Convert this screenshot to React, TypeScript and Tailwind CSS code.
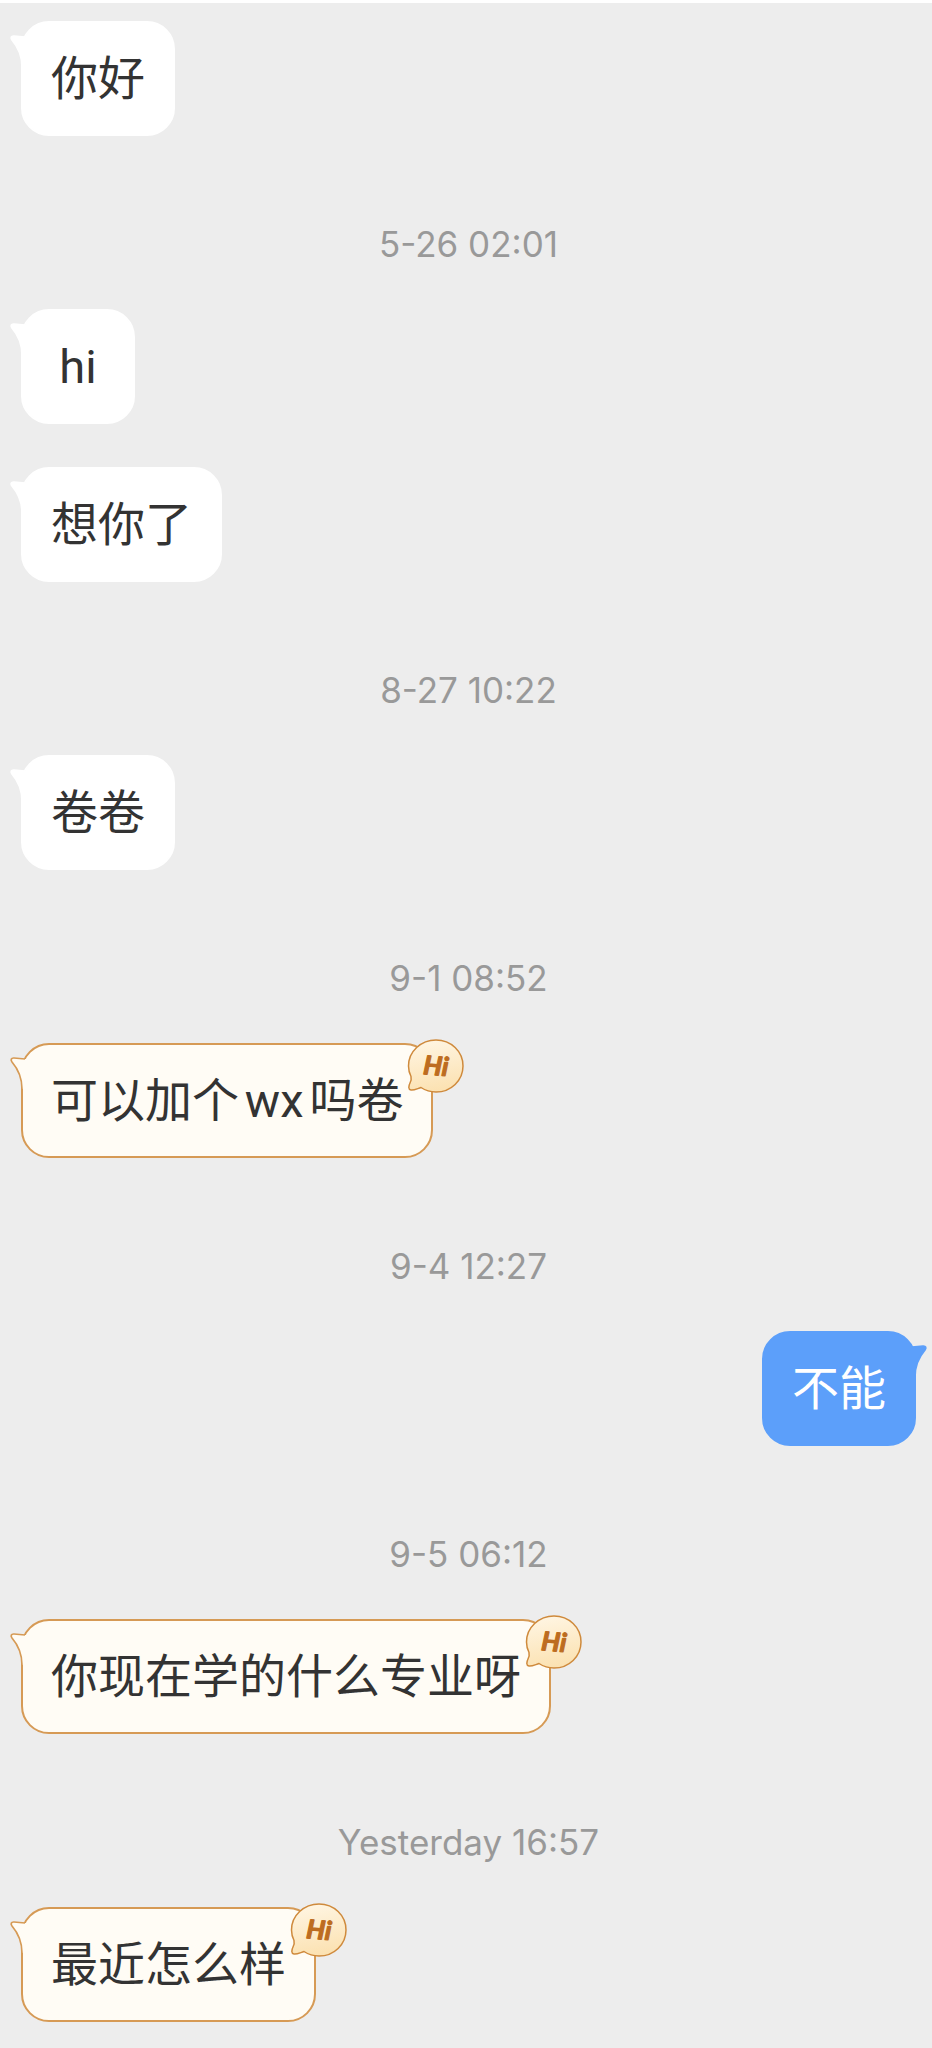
type Tone = "plain" | "cream" | "blue";

type ChatItem =
  | { kind: "time"; id: string; label: string }
  | { kind: "message"; id: string; text: string; tone: Tone };

const chatItems: ChatItem[] = [
  { kind: "message", id: "m1", text: "你好", tone: "plain" },
  { kind: "time", id: "t1", label: "5-26 02:01" },
  { kind: "message", id: "m2", text: "hi", tone: "plain" },
  { kind: "message", id: "m3", text: "想你了", tone: "plain" },
  { kind: "time", id: "t2", label: "8-27 10:22" },
  { kind: "message", id: "m4", text: "卷卷", tone: "plain" },
  { kind: "time", id: "t3", label: "9-1 08:52" },
  { kind: "message", id: "m5", text: "可以加个wx吗卷", tone: "cream" },
  { kind: "time", id: "t4", label: "9-4 12:27" },
  { kind: "message", id: "m6", text: "不能", tone: "blue" },
  { kind: "time", id: "t5", label: "9-5 06:12" },
  { kind: "message", id: "m7", text: "你现在学的什么专业呀", tone: "cream" },
  { kind: "time", id: "t6", label: "Yesterday 16:57" },
  { kind: "message", id: "m8", text: "最近怎么样", tone: "cream" }
];

const bubbleTone: Record<Tone, string> = {
  plain: "border-white bg-white text-[#333333]",
  cream: "border-[#d69a55] bg-[#fffcf5] text-[#333333]",
  blue: "border-[#5c9ffa] bg-[#5c9ffa] text-white"
};

const tailTone: Record<Tone, string> = {
  plain: "fill-white stroke-white",
  cream: "fill-[#fffcf5] stroke-[#d69a55]",
  blue: "fill-[#5c9ffa] stroke-[#5c9ffa]"
};

const tailPath = "M16 16 L5 15 C2 14.8 1.5 17 3 19 C9 26 13 35 13 46";

const Tail = ({ tone }: { tone: Tone }) => (
  <svg
    viewBox="0 0 24 48"
    aria-hidden="true"
    className={`absolute -top-0.5 h-12 w-6 ${
      tone === "blue" ? "-right-3.5 -scale-x-100" : "-left-3.5"
    } ${tailTone[tone]}`}
  >
    {/* the fill hides the bubble's own corner border behind the tail */}
    <path d={`${tailPath} L20 46 L20 16 Z`} stroke="none" />
    <path d={tailPath} fill="none" strokeWidth="1.7" strokeLinejoin="round" />
  </svg>
);

const HiBadge = () => (
  <svg
    viewBox="0 0 58 54"
    aria-hidden="true"
    className="absolute -top-1.5 -right-[34px] h-[54px] w-[58px]"
  >
    <defs>
      <linearGradient id="hi-badge" x1="0.4" y1="0" x2="0.6" y2="1">
        <stop offset="0" stopColor="#fff5e2" />
        <stop offset="1" stopColor="#fbe1b0" />
      </linearGradient>
    </defs>
    <path
      d="M29 1 C44 1 56 12.5 56 27 C56 41.5 44 53 29 53 C23.5 53 18.5 51.5 14 48.5 C10.5 49.5 7 51.5 4 51 C1 50.5 1.5 47 3 44 C4.5 41 4.5 39.5 4 37.5 C2.5 34.5 1.5 31 1.5 27 C1.5 12.5 14 1 29 1 Z"
      fill="url(#hi-badge)"
      stroke="#cf8a3c"
      strokeWidth="1.5"
    />
    <text
      x="29"
      y="36"
      textAnchor="middle"
      transform="rotate(5 29 27)"
      fill="#bd6c20"
      stroke="#bd6c20"
      strokeWidth="1.2"
      strokeLinejoin="round"
      className="font-[Lato,sans-serif] text-[26px] font-bold italic"
    >
      Hi
    </text>
  </svg>
);

const Message = ({ text, tone }: { text: string; tone: Tone }) => (
  <div className={`flex pr-4 pl-[21px] ${tone === "blue" ? "justify-end" : ""}`}>
    <div
      className={`relative min-w-[114px] rounded-[28px] border-2 px-7 py-6 text-center text-[47px] leading-[63px] [text-autospace:normal] ${bubbleTone[tone]}`}
    >
      {text}
      <Tail tone={tone} />
      {tone === "cream" && <HiBadge />}
    </div>
  </div>
);

const TimeLabel = ({ label }: { label: string }) => (
  <p className="pt-[43px] pr-4 pl-[21px] text-center font-[Inter,sans-serif] text-[35px] leading-[44px] text-[#999999]">
    {label}
  </p>
);

export default function App() {
  return (
    <main className="flex min-h-screen flex-col gap-[43px] border-t-3 border-white bg-[#ededed] pt-[18px] pb-6 font-[Roboto,'Noto_Sans_CJK_SC',sans-serif]">
      {chatItems.map((item) =>
        item.kind === "time" ? (
          <TimeLabel key={item.id} label={item.label} />
        ) : (
          <Message key={item.id} text={item.text} tone={item.tone} />
        )
      )}
    </main>
  );
}
